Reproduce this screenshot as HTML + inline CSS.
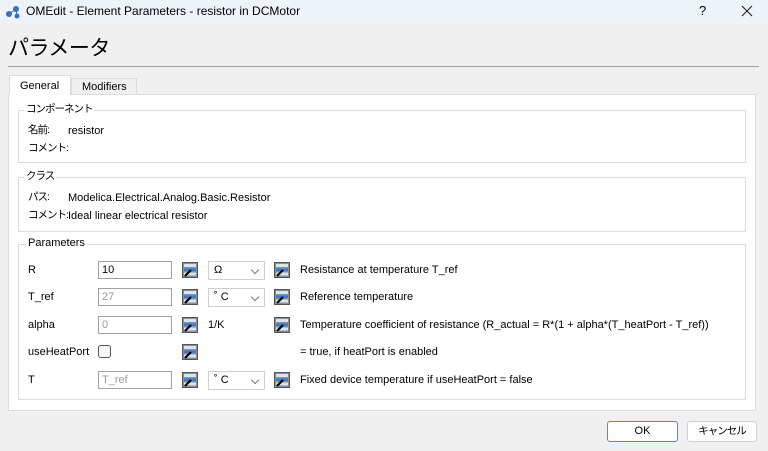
<!DOCTYPE html><html><head><meta charset="utf-8"><style>
*{margin:0;padding:0;box-sizing:border-box}
body{width:768px;height:451px;background:#f0f0f0;font-family:"Liberation Sans","Noto Sans CJK JP",sans-serif;font-size:11px;line-height:13px;color:#000;position:relative;overflow:hidden}
.a{position:absolute;white-space:nowrap}
.j{font-size:10.5px;letter-spacing:-1px;line-height:13px}
.g{position:absolute;border:1px solid #dcdcdc;background:#fff}
.gl{position:absolute;background:#fff;padding:0 2px;font-size:11px;top:0;line-height:13px}
.in{position:absolute;width:74px;height:18px;border:1px solid #a0a0a0;background:#fff;padding:0 3px;font-size:11px;line-height:16px;color:#999}
.cb{position:absolute;width:57px;height:19px;border:1px solid #cfcfcf;background:#fff;padding:0 5px;font-size:11px;line-height:17px}
.cb:after{content:"";position:absolute;right:6px;top:5px;width:5px;height:5px;border-right:1px solid #777;border-bottom:1px solid #777;transform:rotate(45deg)}
.ic{position:absolute;width:16px;height:16px}
</style></head><body>
<div class="a" style="left:0;top:0;width:768px;height:24px;background:#eef3f9"></div>
<svg class="a" style="left:5px;top:5px" width="16" height="14"><circle cx="4" cy="9" r="3" fill="#3a6fbf"/><circle cx="11" cy="4" r="3" fill="#3a6fbf"/><circle cx="12" cy="11" r="2.5" fill="#3a6fbf"/><path d="M4 9L11 4L12 11" stroke="#3a6fbf" fill="none"/></svg>
<div class="a" style="left:26px;top:5px;font-size:12px">OMEdit - Element Parameters - resistor in DCMotor</div>
<div class="a" style="left:699px;top:4px;font-size:13px">?</div>
<svg class="a" style="left:741px;top:5px" width="12" height="12"><path d="M1 1L11 11M11 1L1 11" stroke="#222" stroke-width="1.1"/></svg>
<div class="a" style="left:8px;top:36px;font-size:21px;line-height:26px;letter-spacing:-0.5px">パラメータ</div>
<div class="a" style="left:8px;top:66px;width:751px;height:1px;background:#a0a0a0"></div>
<div class="a" style="left:8px;top:94px;width:748px;height:317px;background:#fff;border:1px solid #dcdcdc"></div>
<div class="a" style="left:9px;top:75px;width:62px;height:20px;background:#fff;border:1px solid #dcdcdc;border-bottom:none;padding:4px 0 0 10px">General</div>
<div class="a" style="left:71px;top:78px;width:66px;height:17px;background:#f0f0f0;border:1px solid #dcdcdc;padding:2px 0 0 10px">Modifiers</div>

<div class="g" style="left:18px;top:110px;width:728px;height:53px"></div>
<div class="a j" style="left:24px;top:103px;background:#fff;padding:0 2px">コンポーネント</div>
<div class="a j" style="left:28px;top:124px">名前:</div><div class="a" style="left:68px;top:125px">resistor</div>
<div class="a j" style="left:28px;top:142px">コメント:</div>

<div class="g" style="left:18px;top:177px;width:728px;height:55px"></div>
<div class="a j" style="left:24px;top:170px;background:#fff;padding:0 2px">クラス</div>
<div class="a j" style="left:28px;top:191px">パス:</div><div class="a" style="left:68px;top:192px">Modelica.Electrical.Analog.Basic.Resistor</div>
<div class="a j" style="left:28px;top:209px">コメント:</div><div class="a" style="left:68px;top:210px">Ideal linear electrical resistor</div>

<div class="g" style="left:18px;top:244px;width:728px;height:156px"></div>
<div class="a" style="left:26px;top:237px;background:#fff;padding:0 2px">Parameters</div>

<div class="a" style="left:28px;top:264px">R</div>
<div class="in" style="left:98px;top:261px;color:#000">10</div>
<div class="cb" style="left:208px;top:261px">Ω</div>
<div class="a" style="left:300px;top:264px">Resistance at temperature T_ref</div>

<div class="a" style="left:28px;top:291px">T_ref</div>
<div class="in" style="left:98px;top:288px">27</div>
<div class="cb" style="left:208px;top:288px">˚ C</div>
<div class="a" style="left:300px;top:291px">Reference temperature</div>

<div class="a" style="left:28px;top:319px">alpha</div>
<div class="in" style="left:98px;top:316px">0</div>
<div class="a" style="left:208px;top:319px">1/K</div>
<div class="a" style="left:300px;top:319px">Temperature coefficient of resistance (R_actual = R*(1 + alpha*(T_heatPort - T_ref))</div>

<div class="a" style="left:28px;top:346px">useHeatPort</div>
<div class="a" style="left:98px;top:345px;width:13px;height:13px;border:1px solid #555;border-radius:3px;background:#f7f7f7"></div>
<div class="a" style="left:300px;top:346px">= true, if heatPort is enabled</div>

<div class="a" style="left:28px;top:374px">T</div>
<div class="in" style="left:98px;top:371px">T_ref</div>
<div class="cb" style="left:208px;top:371px">˚ C</div>
<div class="a" style="left:300px;top:374px">Fixed device temperature if useHeatPort = false</div>

<svg width="0" height="0" style="position:absolute"><defs><symbol id="i" viewBox="0 0 16 16"><rect x="0.5" y="0.5" width="15" height="15" fill="#8a8f96" stroke="#555"/><rect x="2" y="2" width="12" height="3" fill="#d8e6f3"/><rect x="2" y="6.5" width="12" height="2.5" fill="#3b7bd0"/><rect x="2" y="10.5" width="12" height="3" fill="#d8e6f3"/><path d="M3 14L9 8" stroke="#000" stroke-width="2.2"/></symbol></defs></svg>
<svg class="ic" style="left:182px;top:262px"><use href="#i"/></svg>
<svg class="ic" style="left:182px;top:289px"><use href="#i"/></svg>
<svg class="ic" style="left:182px;top:317px"><use href="#i"/></svg>
<svg class="ic" style="left:182px;top:344px"><use href="#i"/></svg>
<svg class="ic" style="left:182px;top:372px"><use href="#i"/></svg>
<svg class="ic" style="left:274px;top:262px"><use href="#i"/></svg>
<svg class="ic" style="left:274px;top:289px"><use href="#i"/></svg>
<svg class="ic" style="left:274px;top:317px"><use href="#i"/></svg>
<svg class="ic" style="left:274px;top:372px"><use href="#i"/></svg>

<div class="a" style="left:607px;top:421px;width:71px;height:21px;border:1px solid #4a8fdc;border-radius:3px;background:#fdfdfd;text-align:center;line-height:19px">OK</div>
<div class="a j" style="left:687px;top:421px;width:70px;height:21px;border:1px solid #d0d0d0;border-radius:3px;background:#fdfdfd;text-align:center;line-height:19px">キャンセル</div>
</body></html>
